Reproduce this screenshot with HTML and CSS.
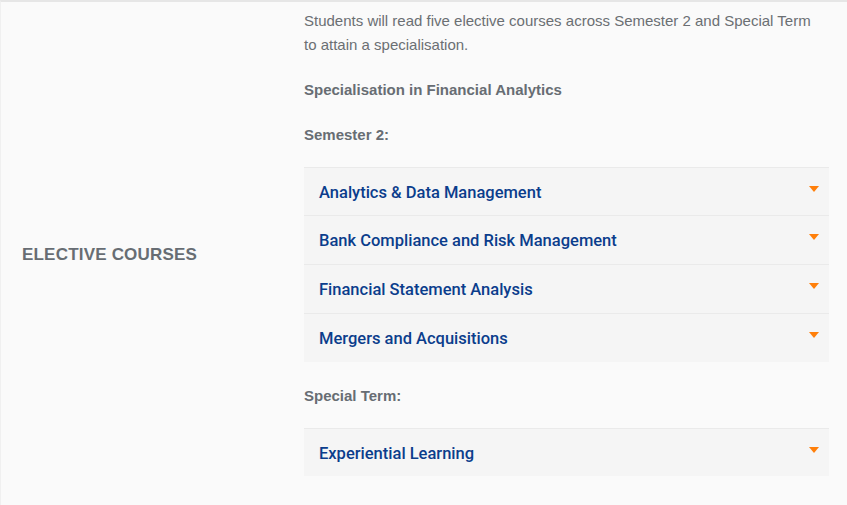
FILE: index.html
```html
<!DOCTYPE html>
<html lang="en">
<head>
    <meta charset="UTF-8">
    <meta name="viewport" content="width=device-width, initial-scale=1.0">
    <title>Elective Courses</title>
    <link rel="stylesheet" href="styles.css">
</head>
<body>
    <div class="course-row">
        <!-- Row heading -->
        <div class="row-label">ELECTIVE COURSES</div>

        <!-- Row content -->
        <div class="row-body">
            <p class="intro">Students will read five elective courses across Semester 2 and Special Term to attain a specialisation.</p>
            <p class="sub-title">Specialisation in Financial Analytics</p>
            <p class="sub-title">Semester 2:</p>
            <div class="accordion">
                <div class="acc-item"><span>Analytics &amp; Data Management</span><i class="caret"></i></div>
                <div class="acc-item"><span>Bank Compliance and Risk Management</span><i class="caret"></i></div>
                <div class="acc-item"><span>Financial Statement Analysis</span><i class="caret"></i></div>
                <div class="acc-item"><span>Mergers and Acquisitions</span><i class="caret"></i></div>
            </div>
            <p class="sub-title">Special Term:</p>
            <div class="accordion">
                <div class="acc-item"><span>Experiential Learning</span><i class="caret"></i></div>
            </div>
        </div>
    </div>
</body>
</html>
```

FILE: styles.css
```css
* {
    margin: 0;
    padding: 0;
    box-sizing: border-box;
}
body {
    background: #fafafa;
    width: 847px;
    height: 505px;
    overflow: hidden;
    font-family: "Liberation Sans", Arial, sans-serif;
}
.course-row {
    display: flex;
    align-items: center;
    height: 505px;
    border-top: 2px solid #e6e6e6;
    border-left: 1px solid #f0f0f0;
}
.row-label {
    width: 303px;
    padding-left: 21px;
    padding-top: 2px;
    font-size: 17px;
    font-weight: bold;
    color: #676d73;
    letter-spacing: 0.2px;
}
.row-body {
    width: 525px;
    align-self: flex-start;
    padding-top: 7px;
}
.intro {
    max-width: 515px;
    font-size: 15px;
    line-height: 24px;
    color: #6b6f73;
}
.sub-title {
    font-size: 15px;
    line-height: 24px;
    font-weight: bold;
    color: #676d73;
    margin-top: 21px;
}
.accordion {
    margin-top: 20px;
    background: #f5f5f5;
}
.accordion + .sub-title {
    margin-top: 22px;
}
.acc-item {
    display: flex;
    justify-content: space-between;
    align-items: flex-start;
    height: 49px;
    padding: 15px 10px 0 15px;
    border-top: 1px solid #eaeaea;
    font-family: Roboto, "Liberation Sans", sans-serif;
    font-size: 16.5px;
    font-weight: 500;
    line-height: 20px;
    color: #0b3d8c;
}
.acc-item:first-child {
    height: 48px;
}
.caret {
    width: 0;
    height: 0;
    margin-top: 3px;
    border-left: 5.5px solid transparent;
    border-right: 5.5px solid transparent;
    border-top: 6px solid #ff7f0a;
}
```
